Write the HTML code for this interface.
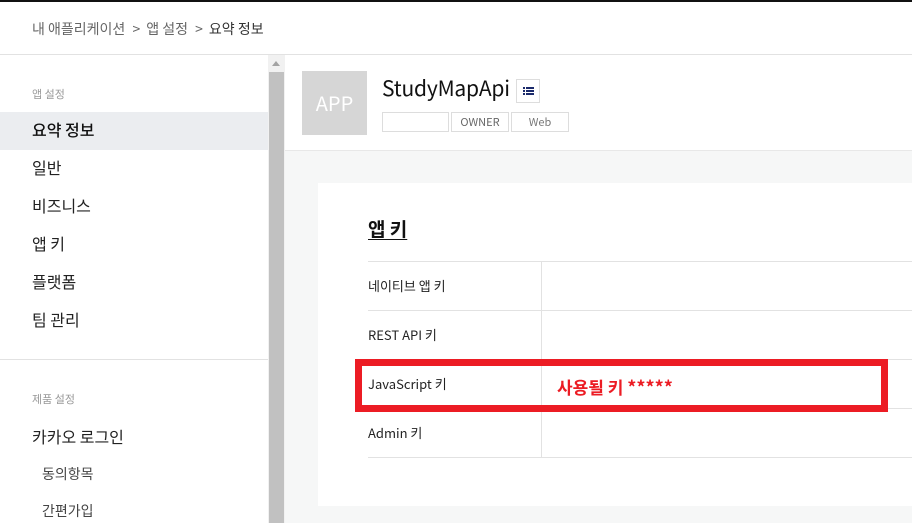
<!DOCTYPE html>
<html><head><meta charset="utf-8"><style>
*{margin:0;padding:0;box-sizing:border-box}
body{width:912px;height:523px;overflow:hidden;background:#fff;font-family:"Noto Sans CJK KR","Liberation Sans",sans-serif;position:relative;color:#222;line-height:1.2}
.a{position:absolute;white-space:nowrap}
.g{margin:0 6px 0 4px}
</style></head><body>
<div class="a" style="left:0;top:0;width:912px;height:2px;background:#111"></div>
<div class="a" style="left:32px;top:21px;font-size:14px;color:#666">내 애플리케이션 <span class="g">&gt;</span>앱 설정 <span class="g">&gt;</span><span style="color:#333">요약 정보</span></div>
<div class="a" style="left:0;top:54px;width:912px;height:1px;background:#e2e2e2"></div>
<!-- sidebar -->
<div class="a" style="left:32px;top:88px;font-size:11px;color:#999">앱 설정</div>
<div class="a" style="left:0;top:112px;width:268px;height:38px;background:#ebedf0"></div>
<div class="a" style="left:32px;top:120px;font-size:16px;color:#111;font-weight:500">요약 정보</div>
<div class="a" style="left:32px;top:158px;font-size:16px">일반</div>
<div class="a" style="left:32px;top:196px;font-size:16px">비즈니스</div>
<div class="a" style="left:32px;top:234px;font-size:16px">앱 키</div>
<div class="a" style="left:32px;top:272px;font-size:16px">플랫폼</div>
<div class="a" style="left:32px;top:310px;font-size:16px">팀 관리</div>
<div class="a" style="left:0;top:359px;width:268px;height:1px;background:#e2e2e2"></div>
<div class="a" style="left:32px;top:393px;font-size:11px;color:#999">제품 설정</div>
<div class="a" style="left:32px;top:427px;font-size:16px">카카오 로그인</div>
<div class="a" style="left:42px;top:466px;font-size:14px;color:#444">동의항목</div>
<div class="a" style="left:42px;top:503px;font-size:14px;color:#444">간편가입</div>
<!-- scrollbar -->
<div class="a" style="left:268px;top:55px;width:17px;height:468px;background:#f1f1f1"></div>
<div class="a" style="left:272px;top:61px;width:0;height:0;border-left:4px solid transparent;border-right:4px solid transparent;border-bottom:5px solid #a3a3a3"></div>
<div class="a" style="left:269px;top:72px;width:15px;height:451px;background:#c1c1c1"></div>
<!-- header -->
<div class="a" style="left:302px;top:71px;width:65px;height:64px;background:#d6d6d6;color:#fff;font-size:20px;text-align:center;line-height:64px">APP</div>
<div class="a" style="left:382px;top:76px;font-size:21px;color:#111;letter-spacing:-0.2px">StudyMapApi</div>
<div class="a" style="left:516px;top:79px;width:24px;height:24px;border:1px solid #ddd"><svg width="22" height="22" viewBox="0 0 22 22"><g fill="#1b2a6b"><rect x="6" y="7" width="2" height="2"/><rect x="9" y="7" width="8" height="2"/><rect x="6" y="10" width="2" height="2"/><rect x="9" y="10" width="8" height="2"/><rect x="6" y="13" width="2" height="2"/><rect x="9" y="13" width="8" height="2"/></g></svg></div>
<div class="a" style="left:382px;top:112px;width:67px;height:20px;border:1px solid #ddd"></div>
<div class="a" style="left:451px;top:112px;width:58px;height:20px;border:1px solid #ddd;font-size:11px;color:#666;text-align:center;line-height:18px">OWNER</div>
<div class="a" style="left:511px;top:112px;width:58px;height:20px;border:1px solid #ddd;font-size:11px;color:#777;text-align:center;line-height:18px">Web</div>
<!-- grey area -->
<div class="a" style="left:285px;top:150px;width:627px;height:373px;background:#f6f7f7;border-top:1px solid #e8e8e8"></div>
<div class="a" style="left:318px;top:183px;width:594px;height:323px;background:#fff"></div>
<div class="a" style="left:368px;top:218px;font-size:19px;font-weight:bold;color:#111;text-decoration:underline;text-underline-offset:3px">앱 키</div>
<div class="a" style="left:368px;top:261px;width:544px;height:1px;background:#e2e2e2"></div>
<div class="a" style="left:368px;top:310px;width:544px;height:1px;background:#e2e2e2"></div>
<div class="a" style="left:368px;top:359px;width:544px;height:1px;background:#e2e2e2"></div>
<div class="a" style="left:368px;top:408px;width:544px;height:1px;background:#e2e2e2"></div>
<div class="a" style="left:368px;top:457px;width:544px;height:1px;background:#e2e2e2"></div>
<div class="a" style="left:541px;top:262px;width:1px;height:195px;background:#e2e2e2"></div>
<div class="a" style="left:368px;top:278px;font-size:13px">네이티브 앱 키</div>
<div class="a" style="left:368px;top:327px;font-size:13px">REST API 키</div>
<div class="a" style="left:368px;top:376px;font-size:13px">JavaScript 키</div>
<div class="a" style="left:368px;top:425px;font-size:13px">Admin 키</div>
<div class="a" style="left:355px;top:359px;width:533px;height:53px;border:7px solid #ec1c24"></div>
<div class="a" style="left:557px;top:377px;font-size:17px;font-weight:bold;color:#ec1c24">사용될 키 <span style="font-size:18px">*****</span></div>
</body></html>
